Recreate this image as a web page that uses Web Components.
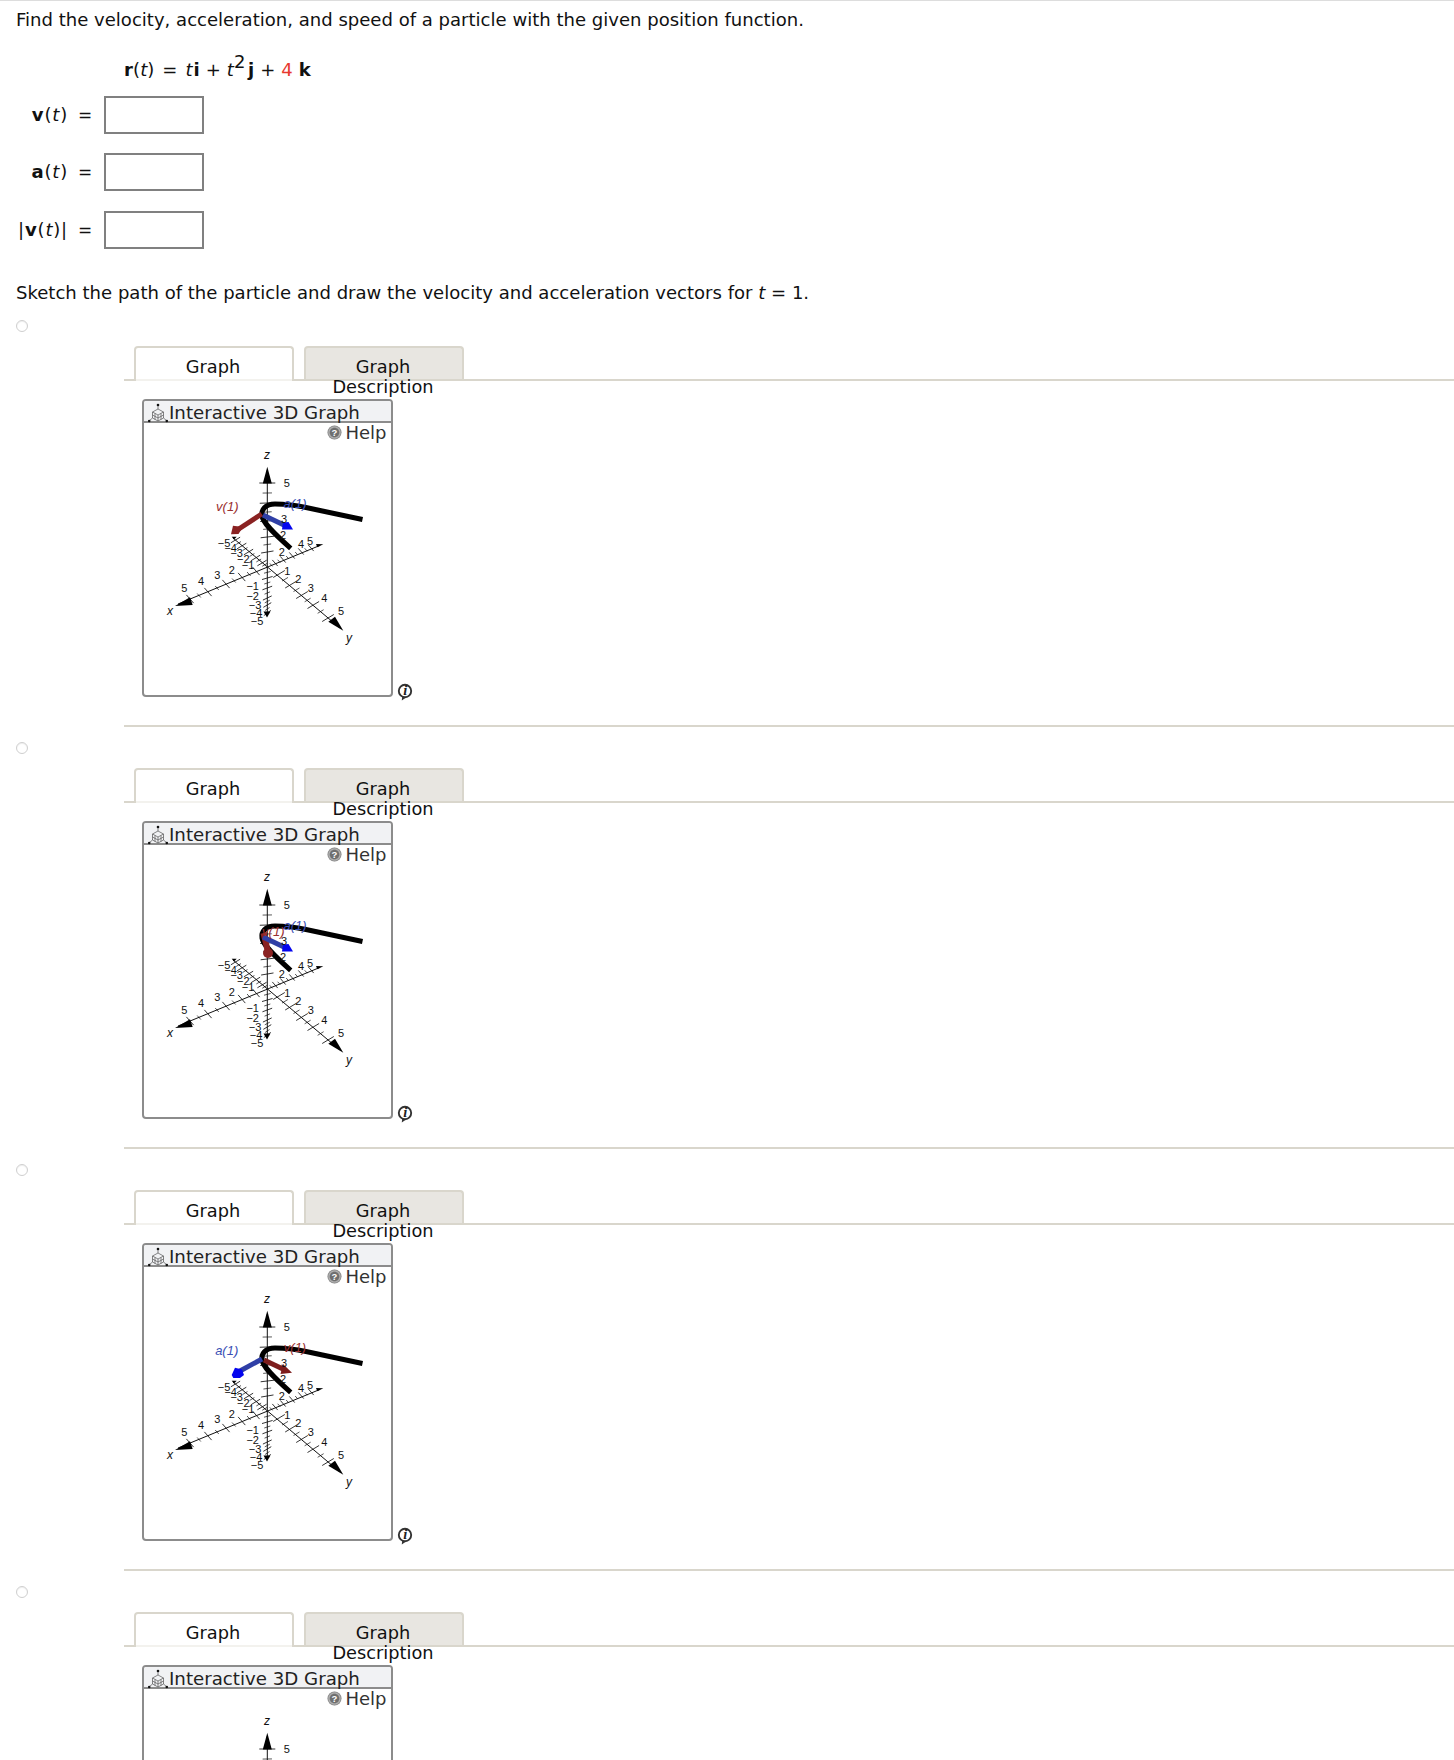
<!DOCTYPE html>
<html lang="en">
<head>
<meta charset="utf-8">
<title>Velocity, acceleration and speed</title>
<style>
html,body{margin:0;padding:0;height:1760px;overflow:hidden;background:#fff}
body{font:18.06px/20px "DejaVu Sans",Verdana,sans-serif;color:#111;border-top:1px solid #ddd;box-sizing:border-box}
</style>
</head>
<body>
<question-sheet>
  <answer-row slot="rows"><span slot="label"><b>v</b>(<i>t</i>)</span></answer-row>
  <answer-row slot="rows"><span slot="label"><b>a</b>(<i>t</i>)</span></answer-row>
  <answer-row slot="rows"><span slot="label">|<b>v</b>(<i>t</i>)|</span></answer-row>
  <choice-option slot="options" variant="1"></choice-option>
  <choice-option slot="options" variant="2"></choice-option>
  <choice-option slot="options" variant="3"></choice-option>
  <choice-option slot="options" variant="1"></choice-option>
</question-sheet>
<script>
function shadow(el,html){const r=el.attachShadow({mode:'open'});r.innerHTML=html;return r;}

class QuestionSheet extends HTMLElement{
  constructor(){super();shadow(this,`<style>
    :host{display:block}
    p{margin:0;padding-left:16px}
    .q{padding-top:9px}
    .f{margin-top:30px;padding-left:124px;height:20px;white-space:pre;letter-spacing:.1px}
    .f sup{font-size:18px;line-height:0;position:relative;vertical-align:8px;margin:0 2.5px 0 0}
    .f .n{color:#e8392f}
    .f .eq{margin:0 2px}
    .f .u{margin-left:1px}
    .rows{display:flex;flex-direction:column;gap:19.33px;margin-top:16px}
    .s{margin-top:34px}
    .opts{margin-top:2.34px}
    i{font-style:italic}
  </style>
  <p class="q">Find the velocity, acceleration, and speed of a particle with the given position function.</p>
  <div class="f"><b>r</b>(<i>t</i>) <span class="eq">=</span> <i>t</i><b class="u">i</b> + <i>t</i><sup>2</sup><b>j</b> + <span class="n">4</span> <b>k</b></div>
  <div class="rows"><slot name="rows"></slot></div>
  <p class="s">Sketch the path of the particle and draw the velocity and acceleration vectors for <i>t</i> = 1.</p>
  <div class="opts"><slot name="options"></slot></div>`);}
}

class AnswerRow extends HTMLElement{
  constructor(){super();shadow(this,`<style>
    :host{display:flex;align-items:center;height:38px}
    .l{width:68px;text-align:right;white-space:nowrap;letter-spacing:.8px}
    .e{width:26px;margin-left:10px;font-size:17px}
    .b{width:100px;height:38px;box-sizing:border-box;border:2px solid #808080;background:#fff}
  </style><div class="l"><slot name="label"></slot></div><div class="e">=</div><div class="b"></div>`);}
}

class ChoiceOption extends HTMLElement{
  constructor(){super();const v=this.getAttribute('variant')||'1';shadow(this,`<style>
    :host{display:block;height:422px;box-sizing:border-box}
    .wrap{display:flex;height:422px;box-sizing:border-box}
    .radio{flex:none;width:12px;height:12px;box-sizing:border-box;border:1px solid #cfcfcf;border-radius:50%;margin:15px 0 0 16px;background:#fff;box-shadow:inset 0 1px 1px #eee}
    .c{flex:1;margin-left:96px;border-bottom:2px solid #d9d6cc;padding-top:41px;box-sizing:border-box}
    .stage{display:flex;align-items:flex-end;margin:18px 0 0 18px}
    graph-info{margin:0 0 -4px 4.5px}
  </style>
  <div class="wrap"><div class="radio"></div><div class="c">
    <graph-tabs></graph-tabs>
    <div class="stage"><graph-box variant="${v}"></graph-box><graph-info></graph-info></div>
  </div></div>`);}
}

class GraphTabs extends HTMLElement{
  constructor(){super();shadow(this,`<style>
    :host{display:flex;gap:10px;padding-left:10px;height:33px;border-bottom:2px solid #d9d6cc;font-size:17.75px}
    .t{width:160px;height:35px;box-sizing:border-box;border:2px solid #d9d6cc;border-bottom:0;border-radius:4px 4px 0 0;text-align:center;padding:9px 2px 0 0;color:#111}
    .a{background:#fff;box-shadow:inset 0 -2px 0 #f3f2ee}
    .i{background:#e8e6e1;height:33px}
  </style><div class="t a">Graph</div><div class="t i">Graph<br>Description</div>`);}
}

class GraphBox extends HTMLElement{
  constructor(){super();const v=this.getAttribute('variant')||'1';shadow(this,`<style>
    :host{display:block;width:250.5px;height:298px;box-sizing:border-box;border:2px solid #8c8c8c;border-radius:4px;background:#fff}
    .h{display:flex;height:20px;padding:0 0 0 4px;background:#f1f2f4;border-bottom:2px solid #8c8c8c;border-radius:2px 2px 0 0;white-space:nowrap;font-size:18.2px}
    .h span{display:block;padding-top:2px;color:#222}
    .cube{flex:none;width:21px;height:20px;margin-top:2px}
    .help{display:flex;justify-content:flex-end;align-items:center;gap:3px;height:20px;padding-right:4px;color:#333;font-size:18px}
    .help svg{flex:none;width:15px;height:15px}
    graph-plot{display:block}
  </style>
  <div class="h"><svg class="cube" viewBox="0 0 21 20" fill="none" stroke="#555" stroke-width=".7">
    <path d="M10 2V6M10 6L4.5 9V15L10 18L15.5 15V9L10 6M4.5 9L10 12L15.5 9M10 12V18M7 10.5V16.5M13 10.5V16.5M4.5 12L10 15L15.5 12M4.5 15L1 18M15.5 15L19 18" />
    <g fill="#111" stroke="none"><circle cx="10" cy="2" r="1.3"/><circle cx="1.2" cy="18" r="1.3"/><circle cx="18.8" cy="18" r="1.3"/></g></svg>
    <span>Interactive 3D Graph</span></div>
  <div class="help"><svg viewBox="0 0 15 15"><defs><radialGradient id="hg" cx=".5" cy=".5" r=".5"><stop offset=".6" stop-color="#6f6f6f"/><stop offset=".78" stop-color="#b5b5b5"/><stop offset="1" stop-color="#7a7a7a"/></radialGradient></defs><circle cx="7.5" cy="7.5" r="7" fill="url(#hg)"/><text x="7.5" y="11" text-anchor="middle" font-family="Liberation Sans" font-weight="700" font-size="9.5" fill="#fff">?</text></svg><span>Help</span></div>
  <graph-plot variant="${v}"></graph-plot>`);}
}

class GraphInfo extends HTMLElement{
  constructor(){super();shadow(this,`<style>
    :host{display:block;width:16px;height:18px}
    svg{display:block}
  </style><svg width="16" height="18" viewBox="0 0 16 18">
    <circle cx="8" cy="8" r="6.2" fill="#fff" stroke="#333" stroke-width="1.9"/>
    <path d="M5.2 13.2L4.8 17.4L9.4 14.2" fill="#333"/>
    <text x="8.2" y="12.4" text-anchor="middle" font-family="Liberation Serif" font-style="italic" font-weight="700" font-size="14.5" fill="#222">i</text></svg>`);}
}

class GraphPlot extends HTMLElement{
  constructor(){super();
    const variant=this.getAttribute('variant')||'1';
    const X={5:[190,599],4:[208,592],3:[226,584],2:[241.7,577],1:[256,571],0:[267.3,566.7],'-1':[275,563],'-2':[283,559.5],'-3':[292,555.5],'-4':[301,551.5],'-5':[311,548]};
    const Y={'-5':[235.5,540],'-4':[241.7,546],'-3':[248.5,552],'-2':[255.5,558],'-1':[262,563],0:[267.3,566.7],1:[279,574],2:[291,584.5],3:[302,595],4:[313.3,605],5:[328,618]};
    const Z={5:483,4:503,3:521,2:537,1:552,0:566.7,'-1':578,'-2':588,'-3':598,'-4':605,'-5':613};
    let t='';
    const seg=(x,y,dx,dy,w)=>`<line x1="${x-dx}" y1="${y-dy}" x2="${x+dx}" y2="${y+dy}" stroke-width="${w}"/>`;
    for(let v=-5;v<=5;v++){
      if(v===0)continue;
      const xs=v>0?1:.75;
      t+=seg(X[v][0],X[v][1],3.6*xs,4.1*xs,.85);
      const ys=v>0?1:.8;
      t+=seg(Y[v][0],Y[v][1],5.8*ys,-3.5*ys,.85);
      t+=seg(267.3,Z[v],3.5+.45*(v+5),-(2.6-.26*(v+5)),.85);
      const nv=v+1;
      if(v<5){
        const a=X[v],b=X[nv];t+=seg((a[0]+b[0])/2,(a[1]+b[1])/2,1.8*xs,2*xs,.7);
        const c=Y[v],d=Y[nv];t+=seg((c[0]+d[0])/2,(c[1]+d[1])/2,3*ys,-1.8*ys,.7);
        t+=seg(267.3,(Z[v]+Z[nv])/2,(3.5+.45*(v+5.5))*.6,-(2.6-.26*(v+5.5))*.6,.7);
      }
    }
    const labels=[
      ['z',267,455,1],['x',170,611,1],['y',349,638,1],
      ['5',286.7,482.7],['3',284,519],['2',283,535],['4',301,544],['5',310,540.7],['2',281.7,551.7],
      ['\u22125',224,542.7],['\u22124',230.7,547.7],['\u22123',236.7,553.3],['\u22122',243.3,559.3],['\u22121',248,565],
      ['5',184.3,587.7],['4',201,581],['3',217.3,575],['2',231.7,570],['1',287.3,570.7],['2',298.3,579],['3',310.7,587.7],['4',324.3,598.3],['5',341,611],
      ['\u22121',252.7,586],['\u22122',252.7,596],['\u22123',255,605],['\u22124',256,613.5],['\u22125',257,621.5]
    ].map(([s,x,y,it])=>`<text x="${x}" y="${y}" dy=".36em"${it?' font-style="italic" font-size="12"':''}>${s}</text>`).join('');
    const RED='#8a2222',BLUE='#2f3fa6',BRIGHT='#0505ee';
    const blueStd=`<line x1="263" y1="515" x2="286" y2="526" stroke="${BLUE}" stroke-width="5"/><polygon points="283,522.5 288.5,522 293,529.6 282,529.6" fill="${BRIGHT}"/>`;
    const arrows={
      1:`<line x1="261.7" y1="514" x2="238" y2="529.5" stroke="${RED}" stroke-width="5"/><polygon points="231,534.2 233,525.8 243,527 238.5,534" fill="${RED}"/>`+blueStd,
      2:`<path d="M263.5 511L268 530" stroke="${RED}" stroke-width="6" fill="none"/><circle cx="268" cy="531" r="5" fill="${RED}"/>`+blueStd,
      3:`<line x1="262" y1="515" x2="239" y2="527.5" stroke="${BLUE}" stroke-width="5"/><polygon points="231.7,531 235,523.8 242,525.5 244,531 240,534 233.3,534" fill="${BRIGHT}"/><line x1="264" y1="516" x2="285" y2="526" stroke="#7d1d1d" stroke-width="5"/><polygon points="283,520 292,528.7 280.5,530" fill="#7d1d1d"/>`
    };
    const names={
      1:`<text x="227.3" y="506.7" dy=".36em" fill="#9a3030" font-style="italic" font-size="13">v(1)</text><text x="295" y="503.3" dy=".36em" fill="#3a4fb5" font-style="italic" font-size="13">a(1)</text>`,
      2:`<text x="273.3" y="509.7" dy=".36em" fill="#9a3030" font-style="italic" font-size="13">v(1)</text><text x="295" y="503.3" dy=".36em" fill="#3a4fb5" font-style="italic" font-size="13">a(1)</text>`,
      3:`<text x="226.7" y="506.7" dy=".36em" fill="#3a4fb5" font-style="italic" font-size="13">a(1)</text><text x="295" y="503.3" dy=".36em" fill="#9a3030" font-style="italic" font-size="13">v(1)</text>`
    };
    shadow(this,`<style>:host{display:block;width:246px;height:251px}svg{display:block}</style>
    <svg width="246" height="251" viewBox="144 443 246 251" font-family="Liberation Sans" font-size="11" text-anchor="middle" fill="#111">
      <g stroke="#111" fill="none" stroke-width="1">
        <line x1="267.3" y1="470" x2="267.3" y2="616"/>
        <line x1="178" y1="604" x2="320" y2="545.4"/>
        <line x1="233" y1="538" x2="340" y2="628"/>
        ${t}
      </g>
      <g fill="#000" stroke="none">
        <polygon points="267.3,466.7 262.8,483.5 271.8,483.5"/>
        <polygon points="267,617.5 263.5,611.5 270.5,611.5"/>
        <polygon points="175,606 190,597.3 192.7,605"/>
        <polygon points="343.3,630.7 328.3,621.7 335,616.7"/>
        <polygon points="323.3,544.3 316,544 317.3,547.3"/>
        <polygon points="231.7,536.7 236.7,536.7 234,539.6"/>
      </g>
      <path d="M362.5 519.5L306 507.5C290 504 282 504 275 504C265 504 261 510 262 516C263 522 270 530 290.7 548.3" fill="none" stroke="#000" stroke-width="5"/>
      ${arrows[variant]}
      ${labels}
      ${names[variant]}
    </svg>`);
  }
}

customElements.define('question-sheet',QuestionSheet);
customElements.define('answer-row',AnswerRow);
customElements.define('graph-plot',GraphPlot);
customElements.define('graph-info',GraphInfo);
customElements.define('graph-box',GraphBox);
customElements.define('graph-tabs',GraphTabs);
customElements.define('choice-option',ChoiceOption);
</script>
</body>
</html>
